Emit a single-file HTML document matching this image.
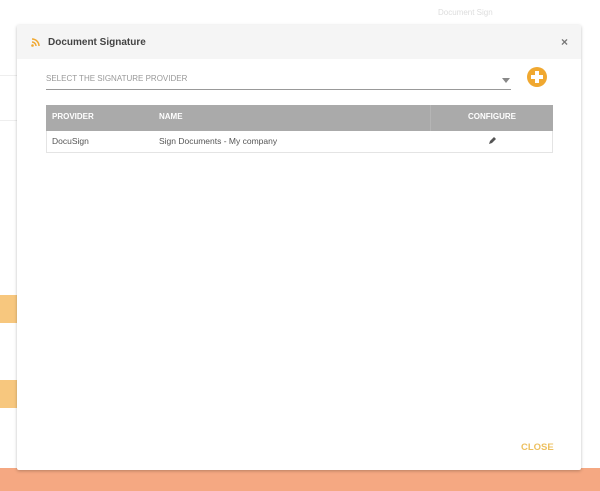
<!DOCTYPE html>
<html><head><style>
body{margin:0;width:600px;height:491px;background:#fff;position:relative;overflow:hidden;font-family:"Liberation Sans",sans-serif;}
.a{position:absolute}
</style></head><body>
<div class="a" style="left:0;top:468px;width:600px;height:23px;background:#f5a882"></div>
<div class="a" style="left:0;top:295px;width:18px;height:28px;background:#f7c77e"></div>
<div class="a" style="left:0;top:380px;width:18px;height:28px;background:#f7c77e"></div>
<div class="a" style="left:0;top:75px;width:18px;height:1px;background:#eee"></div>
<div class="a" style="left:0;top:120px;width:18px;height:1px;background:#eee"></div>
<div class="a" style="left:438px;top:8px;font-size:8px;color:#ddd">Document Sign</div>
<div class="a" style="left:17px;top:25px;width:564px;height:445px;background:#fff;box-shadow:0 1px 3px rgba(0,0,0,.25);border-radius:2px">
 <div class="a" style="left:0;top:0;width:564px;height:34px;background:#f5f5f5"></div>
 <svg class="a" style="left:14px;top:13px" width="9" height="9" viewBox="0 0 9 9"><path d="M1 1a7 7 0 0 1 7 7M1 4a4 4 0 0 1 4 4" stroke="#f0a830" stroke-width="1.5" fill="none"/><circle cx="1.5" cy="7.5" r="1.3" fill="#f0a830"/></svg>
 <div class="a" style="left:31px;top:12px;font-size:10px;font-weight:bold;color:#444">Document Signature</div>
 <div class="a" style="left:544px;top:10px;font-size:12px;font-weight:bold;color:#777">×</div>
 <div class="a" style="left:29px;top:49px;font-size:8px;color:#999">SELECT THE SIGNATURE PROVIDER</div>
 <div class="a" style="left:485px;top:53px;width:0;height:0;border-left:4px solid transparent;border-right:4px solid transparent;border-top:5px solid #888"></div>
 <div class="a" style="left:29px;top:64px;width:465px;height:1px;background:#999"></div>
 <div class="a" style="left:510px;top:42px;width:20px;height:20px;border-radius:50%;background:#f0a830"></div>
 <div class="a" style="left:514px;top:50px;width:12px;height:4px;background:#fff"></div>
 <div class="a" style="left:518px;top:46px;width:4px;height:12px;background:#fff"></div>
 <div class="a" style="left:29px;top:80px;width:507px;height:48px;border:1px solid #e4e4e4;box-sizing:border-box"></div>
 <div class="a" style="left:29px;top:80px;width:507px;height:26px;background:#aaa"></div>
 <div class="a" style="left:413px;top:80px;width:1px;height:26px;background:#b5b5b5"></div>
 <div class="a" style="left:35px;top:87px;font-size:8px;font-weight:bold;color:#fff">PROVIDER</div>
 <div class="a" style="left:142px;top:87px;font-size:8px;font-weight:bold;color:#fff">NAME</div>
 <div class="a" style="left:451px;top:87px;font-size:8px;font-weight:bold;color:#fff">CONFIGURE</div>
 <div class="a" style="left:35px;top:111px;font-size:8.5px;color:#555">DocuSign</div>
 <div class="a" style="left:142px;top:111px;font-size:8.5px;color:#555">Sign Documents - My company</div>
 <svg class="a" style="left:471px;top:112px" width="8" height="8" viewBox="0 0 8 8"><path d="M1 7l1-3 4-4 2 2-4 4z" fill="#555"/></svg>
 <div class="a" style="left:504px;top:417px;font-size:9.5px;font-weight:bold;color:#edc060">CLOSE</div>
</div>
</body></html>
